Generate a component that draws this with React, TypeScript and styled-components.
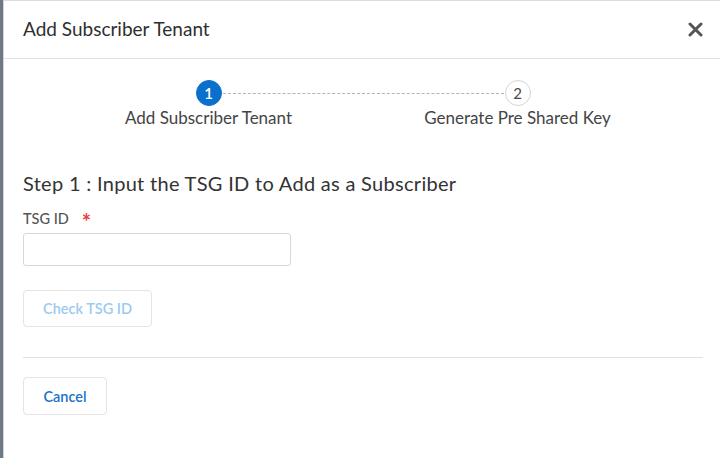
import styled, { createGlobalStyle } from 'styled-components';

const GlobalStyle = createGlobalStyle`
  html, body {
    margin: 0;
    padding: 0;
    background: #ffffff;
    overflow: hidden;
  }
  * {
    box-sizing: border-box;
  }
`;

const Page = styled.div`
  display: flex;
  width: 720px;
  height: 458px;
  font-family: Lato, 'Open Sans', 'Liberation Sans', sans-serif;
`;

const Backdrop = styled.div`
  width: 3px;
  background-color: #6f7985;
  flex-shrink: 0;
`;

const ModalContainer = styled.div`
  flex: 1;
  display: flex;
  flex-direction: column;
  background-color: #ffffff;
  border-top: 1px solid #dcdcdc;
  border-left: 1px solid #d0d4d8;
`;

const ModalHeader = styled.div`
  height: 58px;
  display: flex;
  align-items: center;
  justify-content: space-between;
  padding: 0 16px 0 19px;
  border-bottom: 1px solid #e2e2e2;
`;

const ModalTitle = styled.h1`
  margin: 0 0 2px 0;
  font-size: 19px;
  font-weight: 400;
  color: #2f2f2f;
`;

const CloseButton = styled.button`
  width: 18px;
  height: 18px;
  padding: 0;
  border: none;
  background: transparent;
  display: flex;
  align-items: center;
  justify-content: center;
  cursor: pointer;
`;

const ModalBody = styled.div`
  display: flex;
  flex-direction: column;
  padding: 21px 17px 0 19px;
`;

const Stepper = styled.div`
  display: flex;
  flex-direction: column;
  align-items: center;
`;

const Track = styled.div`
  display: flex;
  align-items: center;
  width: 335px;
`;

const StepCircle = styled.div<{ $active?: boolean }>`
  width: 26px;
  height: 26px;
  border-radius: 50%;
  flex-shrink: 0;
  display: flex;
  align-items: center;
  justify-content: center;
  font-size: 15px;
  background-color: ${({ $active }) => ($active ? '#0b6fce' : '#ffffff')};
  color: ${({ $active }) => ($active ? '#ffffff' : '#4a4a4a')};
  border: 1px solid ${({ $active }) => ($active ? '#0b6fce' : '#d4d4d4')};
  font-weight: ${({ $active }) => ($active ? 600 : 400)};
`;

const Connector = styled.div`
  flex: 1;
  margin: 0 1px;
  border-top: 1px dashed #b4b4b4;
`;

const Labels = styled.div`
  display: flex;
  justify-content: center;
  margin-top: 1px;
`;

const StepLabel = styled.div`
  width: 309px;
  text-align: center;
  font-size: 17px;
  color: #444444;
`;

const SectionTitle = styled.h2`
  margin: 43px 0 0 0;
  font-size: 20px;
  letter-spacing: 0.3px;
  font-weight: 400;
  color: #333333;
`;

const FieldLabel = styled.label`
  margin-top: 9px;
  font-size: 14.5px;
  font-weight: 500;
  color: #555555;
  display: flex;
  align-items: center;
`;

const Required = styled.span`
  color: #e8423d;
  margin-left: 13px;
  font-size: 22px;
  font-weight: 700;
  line-height: 1;
  margin-top: 7px;
`;

const TextInput = styled.input`
  margin-top: 0;
  width: 268px;
  height: 33px;
  border: 1px solid #d8d8d8;
  border-radius: 3px;
  padding: 0 8px;
  font-family: inherit;
  font-size: 14px;
  outline: none;
`;

const Button = styled.button<{ $disabled?: boolean }>`
  align-self: flex-start;
  height: 38px;
  padding: 0 19px;
  background: #ffffff;
  border: 1px solid #e4e4e4;
  border-radius: 4px;
  font-family: inherit;
  font-size: 14.5px;
  font-weight: 600;
  color: ${({ $disabled }) => ($disabled ? '#9ccaf0' : '#1a72c9')};
  cursor: ${({ $disabled }) => ($disabled ? 'default' : 'pointer')};
`;

const CheckButton = styled(Button)`
  margin-top: 24px;
  height: 37px;
`;

const Divider = styled.hr`
  margin: 30px 0 0 0;
  border: none;
  border-top: 1px solid #e0e0e0;
`;

const CancelButton = styled(Button)`
  margin-top: 19px;
  width: 84px;
  padding: 0;
`;

const CloseIcon = () => (
  <svg width="15" height="15" viewBox="0 0 15 15">
    <path
      d="M2 2 L13 13 M13 2 L2 13"
      stroke="#555555"
      strokeWidth="3"
      strokeLinecap="round"
    />
  </svg>
);

export default function App() {
  return (
    <>
      <GlobalStyle />
      <Page>
        <Backdrop />
        <ModalContainer>
          <ModalHeader>
            <ModalTitle>Add Subscriber Tenant</ModalTitle>
            <CloseButton aria-label="Close">
              <CloseIcon />
            </CloseButton>
          </ModalHeader>
          <ModalBody>
            <Stepper>
              <Track>
                <StepCircle $active>1</StepCircle>
                <Connector />
                <StepCircle>2</StepCircle>
              </Track>
              <Labels>
                <StepLabel>Add Subscriber Tenant</StepLabel>
                <StepLabel>Generate Pre Shared Key</StepLabel>
              </Labels>
            </Stepper>
            <SectionTitle>Step 1 : Input the TSG ID to Add as a Subscriber</SectionTitle>
            <FieldLabel>
              TSG ID <Required>*</Required>
            </FieldLabel>
            <TextInput />
            <CheckButton $disabled>Check TSG ID</CheckButton>
            <Divider />
            <CancelButton>Cancel</CancelButton>
          </ModalBody>
        </ModalContainer>
      </Page>
    </>
  );
}
